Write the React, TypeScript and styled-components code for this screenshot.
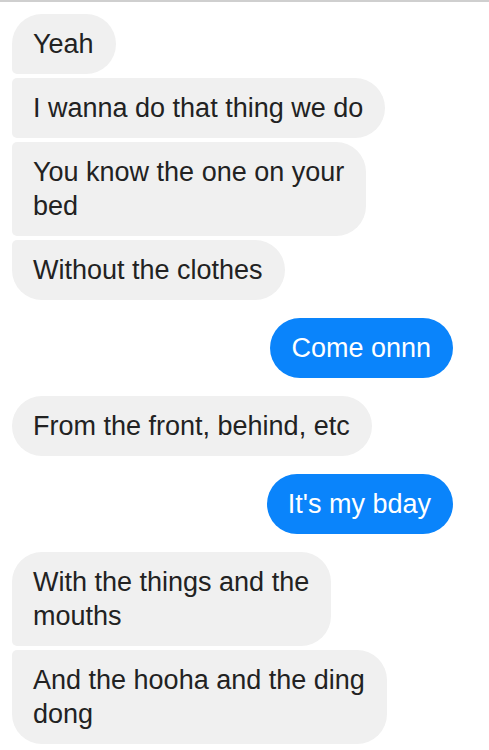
import styled, { createGlobalStyle } from "styled-components";

const GlobalStyle = createGlobalStyle`
  html, body {
    margin: 0;
    padding: 0;
    background: #fff;
  }
  body {
    font-family: "Liberation Sans", Arial, sans-serif;
  }
`;

type Side = "in" | "out";
type Pos = "single" | "first" | "middle" | "last";

const Thread = styled.div`
  width: 489px;
  height: 750px;
  box-sizing: border-box;
  border-top: 2px solid #cfcfcf;
  padding: 12px 36px 0 12px;
  display: flex;
  flex-direction: column;
  gap: 18px;
  overflow: hidden;
`;

const Group = styled.div<{ $side: Side }>`
  display: flex;
  flex-direction: column;
  gap: 4px;
  align-items: ${(p) => (p.$side === "out" ? "flex-end" : "flex-start")};
`;

const big = "30px";
const small = "5px";

// corners: top-left, top-right, bottom-right, bottom-left
const radius = (side: Side, pos: Pos) => {
  const top = pos === "single" || pos === "first" ? big : small;
  const bottom = pos === "single" || pos === "last" ? big : small;
  return side === "in"
    ? `${top} ${big} ${big} ${bottom}`
    : `${big} ${top} ${bottom} ${big}`;
};

const Bubble = styled.div<{ $side: Side; $pos: Pos }>`
  padding: 13px 22px 13px 21px;
  font-size: 27px;
  line-height: 34px;
  white-space: nowrap;
  border-radius: ${(p) => radius(p.$side, p.$pos)};
  background: ${(p) => (p.$side === "out" ? "#0a84fb" : "#f0f0f0")};
  color: ${(p) => (p.$side === "out" ? "#fff" : "#222")};
`;

const Line = styled.div``;

// each message is a list of its wrapped lines
const groups: { side: Side; msgs: string[][] }[] = [
  {
    side: "in",
    msgs: [
      ["Yeah"],
      ["I wanna do that thing we do"],
      ["You know the one on your", "bed"],
      ["Without the clothes"],
    ],
  },
  { side: "out", msgs: [["Come onnn"]] },
  { side: "in", msgs: [["From the front, behind, etc"]] },
  { side: "out", msgs: [["It's my bday"]] },
  {
    side: "in",
    msgs: [
      ["With the things and the", "mouths"],
      ["And the hooha and the ding", "dong"],
    ],
  },
];

const posOf = (i: number, n: number): Pos =>
  n === 1 ? "single" : i === 0 ? "first" : i === n - 1 ? "last" : "middle";

export default function App() {
  return (
    <>
      <GlobalStyle />
      <Thread>
        {groups.map((g, gi) => (
          <Group key={gi} $side={g.side}>
            {g.msgs.map((lines, i) => (
              <Bubble key={i} $side={g.side} $pos={posOf(i, g.msgs.length)}>
                {lines.map((l, li) => (
                  <Line key={li}>{l}</Line>
                ))}
              </Bubble>
            ))}
          </Group>
        ))}
      </Thread>
    </>
  );
}
